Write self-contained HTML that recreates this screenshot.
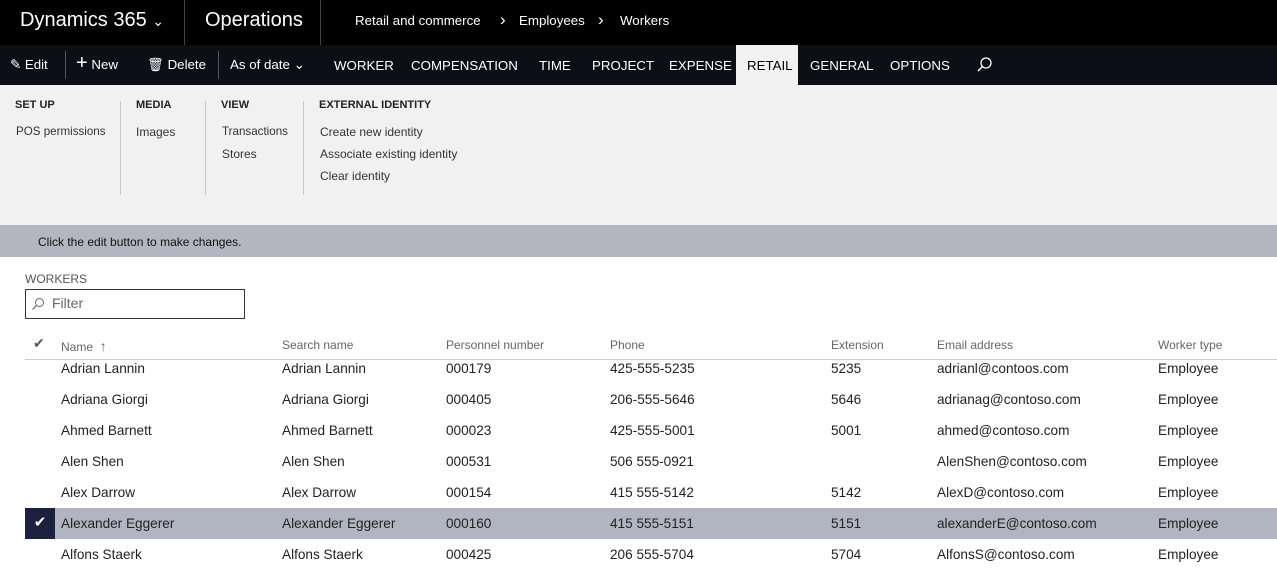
<!DOCTYPE html>
<html><head><meta charset="utf-8"><style>
*{margin:0;padding:0;box-sizing:border-box}
body{width:1277px;height:574px;overflow:hidden;background:#fff;font-family:"Segoe UI","Liberation Sans",sans-serif;position:relative}
.abs{position:absolute;white-space:nowrap}
#top{position:absolute;left:0;top:0;width:1277px;height:45px;background:#000;color:#fff}
#bar{position:absolute;left:0;top:45px;width:1277px;height:40px;background:#0d0f16;color:#fff;font-size:13.3px}
#rib{position:absolute;left:0;top:85px;width:1277px;height:140px;background:#f1f1f1;font-size:12px;color:#333}
#msg{position:absolute;left:0;top:225px;width:1277px;height:32px;background:#b3b6c1;font-size:12px;color:#111}
.h{font-weight:bold;font-size:11px;color:#222}
.sep{position:absolute;width:1px;background:#c8c8c8}
.th{font-size:12px;color:#666;top:338px}
.row{position:absolute;left:25px;width:1252px;height:31px;font-size:13.6px;color:#222}
.row span{position:absolute;top:8px;white-space:nowrap}
</style></head><body>
<div id="top">
<div class="abs" style="left:20px;top:9px;font-size:20px">Dynamics 365 <span style="font-size:14px">&#8964;</span></div>
<div class="sep" style="left:184px;top:0;height:45px;background:#444"></div>
<div class="abs" style="left:205px;top:9px;font-size:20px">Operations</div>
<div class="sep" style="left:320px;top:0;height:45px;background:#444"></div>
<div class="abs" style="left:355px;top:13px;font-size:13.3px">Retail and commerce</div>
<div class="abs" style="left:500px;top:10px;font-size:17px">&#x203A;</div>
<div class="abs" style="left:519px;top:13px;font-size:13.3px">Employees</div>
<div class="abs" style="left:598px;top:10px;font-size:17px">&#x203A;</div>
<div class="abs" style="left:620px;top:13px;font-size:13.3px">Workers</div>
</div>
<div id="bar">
<div class="abs" style="left:10px;top:12px">&#9998; Edit</div>
<div class="sep" style="left:65px;top:6px;height:28px;background:#555"></div>
<div class="abs" style="left:76px;top:10px"><span style="font-size:20px;line-height:16px">+</span> New</div>
<div class="abs" style="left:147px;top:12px">&#128465; Delete</div>
<div class="sep" style="left:218px;top:6px;height:28px;background:#555"></div>
<div class="abs" style="left:230px;top:12px">As of date &#8964;</div>
<div class="abs" style="left:334px;top:13px">WORKER</div>
<div class="abs" style="left:411px;top:13px">COMPENSATION</div>
<div class="abs" style="left:539px;top:13px">TIME</div>
<div class="abs" style="left:592px;top:13px">PROJECT</div>
<div class="abs" style="left:669px;top:13px">EXPENSE</div>
<div class="abs" style="left:736px;top:0;width:62px;height:40px;background:#f1f1f1;color:#000;padding:13px 0 0 11px">RETAIL</div>
<div class="abs" style="left:810px;top:13px">GENERAL</div>
<div class="abs" style="left:890px;top:13px">OPTIONS</div>
<svg class="abs" style="left:976px;top:11px" width="18" height="18" viewBox="0 0 18 18"><circle cx="10" cy="7" r="5" fill="none" stroke="#fff" stroke-width="1.3"/><line x1="6.5" y1="10.5" x2="2" y2="15" stroke="#fff" stroke-width="1.5"/></svg>
</div>
<div id="rib">
<div class="abs h" style="left:15px;top:14px">SET UP</div>
<div class="abs" style="left:16px;top:40px;font-size:11.6px">POS permissions</div>
<div class="sep" style="left:120px;top:16px;height:94px"></div>
<div class="abs h" style="left:136px;top:14px">MEDIA</div>
<div class="abs" style="left:136px;top:40px">Images</div>
<div class="sep" style="left:205px;top:16px;height:94px"></div>
<div class="abs h" style="left:221px;top:14px">VIEW</div>
<div class="abs" style="left:222px;top:40px;font-size:11.6px">Transactions</div>
<div class="abs" style="left:222px;top:62px">Stores</div>
<div class="sep" style="left:303px;top:16px;height:94px"></div>
<div class="abs h" style="left:319px;top:14px">EXTERNAL IDENTITY</div>
<div class="abs" style="left:320px;top:40px">Create new identity</div>
<div class="abs" style="left:320px;top:62px">Associate existing identity</div>
<div class="abs" style="left:320px;top:84px">Clear identity</div>
</div>
<div id="msg"><div class="abs" style="left:38px;top:10px">Click the edit button to make changes.</div></div>
<div class="abs" style="left:25px;top:272px;font-size:12px;color:#555">WORKERS</div>
<div class="abs" style="left:25px;top:289px;width:220px;height:30px;border:1px solid #333;font-size:14px;color:#666;padding:5px 0 0 26px">Filter</div>
<svg class="abs" style="left:31px;top:297px" width="14" height="14" viewBox="0 0 14 14"><circle cx="8.5" cy="5.5" r="4" fill="none" stroke="#666" stroke-width="1"/><line x1="5.5" y1="8.5" x2="1.5" y2="12.5" stroke="#666" stroke-width="1.2"/></svg>
<div class="abs" style="left:33px;top:335px;font-size:14px;color:#555">&#10004;</div>
<div class="abs th" style="left:61px">Name &nbsp;<span style="font-size:14px">&#8593;</span></div>
<div class="abs th" style="left:282px">Search name</div>
<div class="abs th" style="left:446px">Personnel number</div>
<div class="abs th" style="left:610px">Phone</div>
<div class="abs th" style="left:831px">Extension</div>
<div class="abs th" style="left:937px">Email address</div>
<div class="abs th" style="left:1158px">Worker type</div>
<div class="abs" style="left:25px;top:359px;width:1252px;height:1px;background:#ccc"></div>
<div class="row" style="top:353px"><span style="left:36px">Adrian Lannin</span><span style="left:257px">Adrian Lannin</span><span style="left:421px">000179</span><span style="left:585px">425-555-5235</span><span style="left:806px">5235</span><span style="left:912px">adrianl@contoos.com</span><span style="left:1133px">Employee</span></div>
<div class="row" style="top:384px"><span style="left:36px">Adriana Giorgi</span><span style="left:257px">Adriana Giorgi</span><span style="left:421px">000405</span><span style="left:585px">206-555-5646</span><span style="left:806px">5646</span><span style="left:912px">adrianag@contoso.com</span><span style="left:1133px">Employee</span></div>
<div class="row" style="top:415px"><span style="left:36px">Ahmed Barnett</span><span style="left:257px">Ahmed Barnett</span><span style="left:421px">000023</span><span style="left:585px">425-555-5001</span><span style="left:806px">5001</span><span style="left:912px">ahmed@contoso.com</span><span style="left:1133px">Employee</span></div>
<div class="row" style="top:446px"><span style="left:36px">Alen Shen</span><span style="left:257px">Alen Shen</span><span style="left:421px">000531</span><span style="left:585px">506 555-0921</span><span style="left:912px">AlenShen@contoso.com</span><span style="left:1133px">Employee</span></div>
<div class="row" style="top:477px"><span style="left:36px">Alex Darrow</span><span style="left:257px">Alex Darrow</span><span style="left:421px">000154</span><span style="left:585px">415 555-5142</span><span style="left:806px">5142</span><span style="left:912px">AlexD@contoso.com</span><span style="left:1133px">Employee</span></div>
<div class="row" style="top:508px;background:#b0b5c1"><div style="position:absolute;left:0;top:0;width:30px;height:31px;background:#1c2140;color:#fff;font-size:15px;text-align:center;padding-top:5px">&#10004;</div><span style="left:36px">Alexander Eggerer</span><span style="left:257px">Alexander Eggerer</span><span style="left:421px">000160</span><span style="left:585px">415 555-5151</span><span style="left:806px">5151</span><span style="left:912px">alexanderE@contoso.com</span><span style="left:1133px">Employee</span></div>
<div class="row" style="top:539px"><span style="left:36px">Alfons Staerk</span><span style="left:257px">Alfons Staerk</span><span style="left:421px">000425</span><span style="left:585px">206 555-5704</span><span style="left:806px">5704</span><span style="left:912px">AlfonsS@contoso.com</span><span style="left:1133px">Employee</span></div>
</body></html>
